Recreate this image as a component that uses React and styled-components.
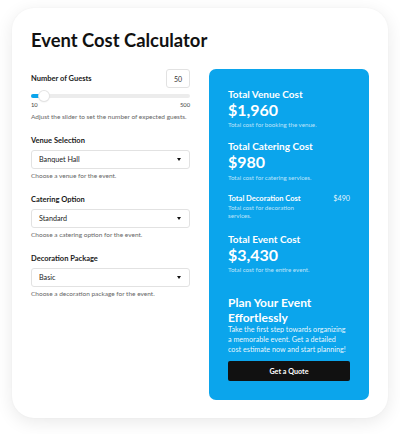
import React from "react";
import styled, { createGlobalStyle } from "styled-components";

const Global = createGlobalStyle`
  html, body { margin: 0; padding: 0; background: #fff; }
  body { font-family: Lato, "Noto Sans", sans-serif; color: #111; }
  * { box-sizing: border-box; }
`;

const Page = styled.div`
  width: 400px;
  height: 434px;
  padding: 8px 12px 16px 12px;
`;

const Card = styled.div`
  width: 376px;
  height: 410px;
  background: #fff;
  border-radius: 22px;
  box-shadow: 0 4px 18px rgba(0, 0, 0, 0.09), 0 0 2px rgba(0,0,0,0.04);
  padding: 22px 19px 18px 19px;
  display: flex;
  flex-direction: column;
`;

const Title = styled.h1`
  margin: 0 0 19px 0;
  font-size: 18.4px;
  line-height: 20px;
  font-weight: 700;
  color: #111;
`;

const Columns = styled.div`
  display: grid;
  grid-template-columns: 159px 160px;
  column-gap: 19px;
  flex: 1;
`;

const Left = styled.div`
  display: flex;
  flex-direction: column;
`;

const Group = styled.div`
  display: flex;
  flex-direction: column;
  margin-bottom: ${(p) => p.$mb || 0}px;
`;

const LabelRow = styled.div`
  display: flex;
  align-items: center;
  justify-content: space-between;
`;

const Label = styled.div`
  font-size: 7.5px;
  font-weight: 700;
  color: #1a1a1a;
  line-height: 10px;
  margin-bottom: ${(p) => p.$mb || 0}px;
`;

const NumberBox = styled.div`
  width: 24px;
  height: 19px;
  border: 1px solid #e2e2e2;
  border-radius: 3px;
  font-size: 7px;
  color: #333;
  display: flex;
  align-items: center;
  justify-content: center;
`;

const Track = styled.div`
  position: relative;
  height: 4px;
  border-radius: 2px;
  background: #ececec;
  margin-top: 6px;
`;

const Fill = styled.div`
  height: 4px;
  border-radius: 2px;
  background: #0ba5ec;
`;

const Thumb = styled.div`
  position: absolute;
  top: 50%;
  width: 10px;
  height: 10px;
  margin-left: -5px;
  margin-top: -5px;
  border-radius: 50%;
  background: #fff;
  box-shadow: 0 0 0 1px #e4e4e4, 0 1px 2px rgba(0,0,0,0.12);
`;

const RangeLabels = styled.div`
  display: flex;
  justify-content: space-between;
  font-size: 5.8px;
  color: #444;
  margin-top: 3px;
  line-height: 7px;
`;

const Help = styled.div`
  font-size: 6.5px;
  color: #666;
  line-height: 8px;
  margin-top: ${(p) => p.$mt || 0}px;
`;

const Select = styled.div`
  height: 19px;
  border: 1px solid #e2e2e2;
  border-radius: 3px;
  display: flex;
  align-items: center;
  justify-content: space-between;
  padding: 0 8px 0 7px;
  font-size: 7.2px;
  color: #222;
`;

const Caret = styled.span`
  width: 0;
  height: 0;
  border-left: 2.5px solid transparent;
  border-right: 2.5px solid transparent;
  border-top: 3px solid #111;
`;

const Panel = styled.div`
  background: #0ba5ec;
  border-radius: 7px;
  padding: 19px 19px 18px 19px;
  color: #fff;
  display: flex;
  flex-direction: column;
`;

const CostBlock = styled.div`
  margin-bottom: ${(p) => p.$mb || 0}px;
`;

const CostTitle = styled.div`
  font-size: 10px;
  font-weight: 700;
  line-height: 12px;
`;

const CostValue = styled.div`
  font-size: 16px;
  font-weight: 700;
  line-height: 20px;
`;

const CostNote = styled.div`
  font-size: 6.2px;
  line-height: 8px;
  color: rgba(255, 255, 255, 0.72);
  margin-top: ${(p) => (p.$mt != null ? p.$mt : 2)}px;
`;

const InlineRow = styled.div`
  display: flex;
  justify-content: space-between;
  align-items: flex-start;
`;

const InlineText = styled.div`
  display: flex;
  flex-direction: column;
  width: 76px;
`;

const SmallTitle = styled.div`
  font-size: 7.5px;
  font-weight: 700;
  line-height: 9px;
  white-space: nowrap;
`;

const SmallValue = styled.div`
  font-size: 7.2px;
  line-height: 9px;
  color: rgba(255,255,255,0.9);
`;

const SmallNote = styled.div`
  font-size: 6.2px;
  line-height: 8px;
  color: rgba(255, 255, 255, 0.72);
  margin-top: 1px;
`;

const PromoTitle = styled.div`
  font-size: 12px;
  font-weight: 700;
  line-height: 15px;
`;

const PromoText = styled.div`
  font-size: 7.2px;
  line-height: 10px;
  color: rgba(255,255,255,0.92);
  margin-top: 0;
`;

const Button = styled.button`
  margin-top: 6px;
  height: 20px;
  width: 100%;
  border: none;
  border-radius: 2px;
  background: #111;
  color: #fff;
  font-family: inherit;
  font-size: 7.2px;
  font-weight: 700;
  cursor: pointer;
`;

const selects = [
  { label: "Venue Selection", value: "Banquet Hall", help: "Choose a venue for the event." },
  { label: "Catering Option", value: "Standard", help: "Choose a catering option for the event." },
  { label: "Decoration Package", value: "Basic", help: "Choose a decoration package for the event." },
];

export default function App() {
  const guests = 50;
  const pct = ((guests - 10) / 490) * 100;
  return (
    <Page>
      <Global />
      <Card>
        <Title>Event Cost Calculator</Title>
        <Columns>
          <Left>
            <Group $mb={15}>
              <LabelRow>
                <Label>Number of Guests</Label>
                <NumberBox>{guests}</NumberBox>
              </LabelRow>
              <Track>
                <Fill style={{ width: `${pct}%` }} />
                <Thumb style={{ left: `${pct}%` }} />
              </Track>
              <RangeLabels>
                <span>10</span>
                <span>500</span>
              </RangeLabels>
              <Help $mt={5}>Adjust the slider to set the number of expected guests.</Help>
            </Group>
            {selects.map((s) => (
              <Group key={s.label} $mb={15}>
                <Label $mb={4}>{s.label}</Label>
                <Select>
                  <span>{s.value}</span>
                  <Caret />
                </Select>
                <Help $mt={3}>{s.help}</Help>
              </Group>
            ))}
          </Left>
          <Panel>
            <CostBlock $mb={11}>
              <CostTitle>Total Venue Cost</CostTitle>
              <CostValue>$1,960</CostValue>
              <CostNote $mt={1}>Total cost for booking the venue.</CostNote>
            </CostBlock>
            <CostBlock $mb={12}>
              <CostTitle>Total Catering Cost</CostTitle>
              <CostValue>$980</CostValue>
              <CostNote>Total cost for catering services.</CostNote>
            </CostBlock>
            <CostBlock $mb={13}>
              <InlineRow>
                <InlineText>
                  <SmallTitle>Total Decoration Cost</SmallTitle>
                  <SmallNote>Total cost for decoration services.</SmallNote>
                </InlineText>
                <SmallValue>$490</SmallValue>
              </InlineRow>
            </CostBlock>
            <CostBlock $mb={21}>
              <CostTitle>Total Event Cost</CostTitle>
              <CostValue>$3,430</CostValue>
              <CostNote $mt={1}>Total cost for the entire event.</CostNote>
            </CostBlock>
            <PromoTitle>
              Plan Your Event
              <br />
              Effortlessly
            </PromoTitle>
            <PromoText>
              Take the first step towards organizing a memorable event. Get a detailed cost estimate now and start planning!
            </PromoText>
            <Button>Get a Quote</Button>
          </Panel>
        </Columns>
      </Card>
    </Page>
  );
}
